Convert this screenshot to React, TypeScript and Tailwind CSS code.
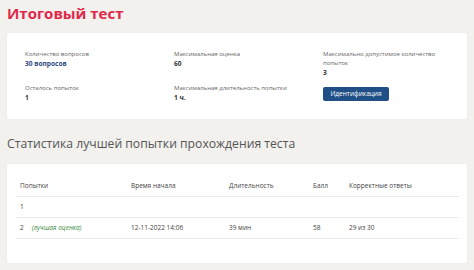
export default function App() {
  const rows = [
    { n: "1", best: false, start: "", dur: "", score: "", ok: "" },
    { n: "2", best: true, start: "12-11-2022 14:06", dur: "39 мин", score: "58", ok: "29 из 30" },
  ];

  return (
    <div
      className="h-[270px] w-[474px] overflow-hidden bg-[#f2f1ee] text-[#444]"
      style={{ fontFamily: '"Open Sans", "Noto Sans", sans-serif' }}
    >
      <h1 className="px-[7px] pt-[1px] text-[15px] font-bold leading-[24px] text-[#e0284a]">
        Итоговый тест
      </h1>

      <div className="mx-[7px] mt-[8px] h-[86px] rounded-[2px] bg-white pl-[18px] pt-[17px] shadow-[0_0_1px_rgba(0,0,0,0.12)]">
        <div className="grid grid-cols-[149px_149px_1fr] gap-y-[6px]">
          <Info label="Количество вопросов" value="30 вопросов" accent />
          <Info label="Максимальная оценка" value="60" />
          <Info label={<>Максимально допустимое количество<br />попыток</>} value="3" />
          <Info label="Осталось попыток" value="1" />
          <Info label="Максимальная длительность попытки" value="1 ч." />
          <div className="flex pt-[3px]">
            <button className="block h-[14px] w-[66px] rounded-[2px] bg-[#1f4f86] text-[6.5px] leading-[14px] text-white">
              Идентификация
            </button>
          </div>
        </div>
      </div>

      <h2 className="mt-[15px] px-[7px] text-[12.2px] leading-[20px] text-[#555]">
        Статистика лучшей попытки прохождения теста
      </h2>

      <div className="mx-[7px] mt-[10px] h-[99px] rounded-[2px] bg-white pl-[9px] pr-[8px] pt-[12px] shadow-[0_0_1px_rgba(0,0,0,0.12)]">
        <table className="w-full border-collapse text-[6.5px] text-[#444]">
          <thead>
            <tr className="h-[20px] border-b border-[#ebebeb] text-left">
              <th className="w-[111px] pl-[4px] font-normal">Попытки</th>
              <th className="w-[98px] pl-[4px] font-normal">Время начала</th>
              <th className="w-[84px] pl-[4px] font-normal">Длительность</th>
              <th className="w-[36px] pl-[4px] font-normal">Балл</th>
              <th className="pl-[4px] font-normal">Корректные ответы</th>
            </tr>
          </thead>
          <tbody>
            {rows.map((r) => (
              <tr key={r.n} className="h-[21px] border-b border-[#ebebeb]">
                <td className="pl-[4px]">
                  {r.n}
                  {r.best && (
                    <span className="ml-[8px] italic text-[#3b8a3b]">(лучшая оценка)</span>
                  )}
                </td>
                <td className="pl-[4px]">{r.start}</td>
                <td className="pl-[4px]">{r.dur}</td>
                <td className="pl-[4px]">{r.score}</td>
                <td className="pl-[4px]">{r.ok}</td>
              </tr>
            ))}
          </tbody>
        </table>
      </div>
    </div>
  );
}

function Info({ label, value, accent }: { label: React.ReactNode; value: string; accent?: boolean }) {
  return (
    <div>
      <div className="text-[6px] leading-[9px] text-[#666]">{label}</div>
      <div className={`text-[6.6px] font-bold leading-[10px] ${accent ? "text-[#2c4a7e]" : "text-[#333]"}`}>
        {value}
      </div>
    </div>
  );
}
